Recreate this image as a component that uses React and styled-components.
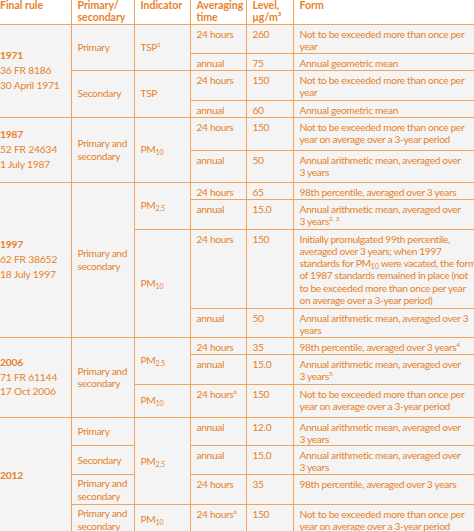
import React from "react";
import styled, { createGlobalStyle } from "styled-components";

const GlobalStyle = createGlobalStyle`
  html, body {
    margin: 0;
    padding: 0;
    background: #ffffff;
    overflow: hidden;
  }
  body {
    font-family: Lato, "Open Sans", sans-serif;
  }
`;

const orange = "#e6822a";
const line = "#f2a35c";

const Table = styled.table`
  width: 474px;
  table-layout: fixed;
  border-collapse: collapse;
  color: ${orange};
  font-size: 10.2px;
  letter-spacing: -0.35px;
  line-height: 12.3px;
  margin-left: -1px;
`;

const HeadRow = styled.tr`
  height: 24px;
  background: #ffffff;
`;

const Th = styled.th`
  text-align: left;
  vertical-align: top;
  font-weight: 700;
  font-size: 10.5px;
  letter-spacing: 0;
  padding: 0 0 0 ${(p) => (p.$first ? 1 : 6)}px;
  line-height: 11.5px;
  border: 1px solid ${line};
  border-top: none;
  border-bottom-width: 1.5px;
  &:first-child {
    border-left: none;
  }
  &:last-child {
    border-right: none;
  }
`;

const Row = styled.tr`
  height: ${(p) => p.$h}px;
  background: #f4f4f4;
`;

const Td = styled.td`
  vertical-align: ${(p) => (p.$mid ? "middle" : "top")};
  padding: ${(p) => (p.$mid ? "0 0 0 6px" : "3px 0 0 6px")};
  border: 1px solid ${line};
  white-space: nowrap;
  overflow: visible;
  &:last-child {
    border-right: none;
  }
`;

const RuleCell = styled.td`
  vertical-align: middle;
  padding: 0 0 0 1px;
  border: 1px solid ${line};
  border-left: none;
  line-height: 14.8px;
  font-size: 10.3px;
  letter-spacing: -0.2px;
  white-space: nowrap;
`;

const Year = styled.div`
  font-weight: 700;
`;

const Sub = styled.sub`
  font-size: 7px;
  line-height: 0;
  vertical-align: -2px;
  letter-spacing: 0;
`;

const Sup = styled.sup`
  font-size: 6.5px;
  line-height: 0;
  vertical-align: 4px;
  letter-spacing: 0;
`;

const PM = ({ n }) => (
  <>
    PM<Sub>{n}</Sub>
  </>
);

const Rule = ({ span, year, fr, date }) => (
  <RuleCell rowSpan={span}>
    <Year>{year}</Year>
    {fr && <div>{fr}</div>}
    {date && <div>{date}</div>}
  </RuleCell>
);

const notExceeded3 = (
  <>
    Not to be exceeded more than once per
    <br />
    year on average over a 3-year period
  </>
);

export default function App() {
  return (
    <>
      <GlobalStyle />
      <Table>
        <colgroup>
          <col style={{ width: 72 }} />
          <col style={{ width: 63 }} />
          <col style={{ width: 56 }} />
          <col style={{ width: 56 }} />
          <col style={{ width: 47 }} />
          <col style={{ width: 181 }} />
        </colgroup>
        <thead>
          <HeadRow>
            <Th $first>Final rule</Th>
            <Th>
              Primary/
              <br />
              secondary
            </Th>
            <Th>Indicator</Th>
            <Th>
              Averaging
              <br />
              time
            </Th>
            <Th>
              Level,
              <br />
              μg/m³
            </Th>
            <Th>Form</Th>
          </HeadRow>
        </thead>
        <tbody>
          <Row $h={29}>
            <Rule span={4} year="1971" fr="36 FR 8186" date="30 April 1971" />
            <Td $mid rowSpan={2}>Primary</Td>
            <Td $mid rowSpan={2}>
              TSP<Sup>1</Sup>
            </Td>
            <Td>24 hours</Td>
            <Td>260</Td>
            <Td>
              Not to be exceeded more than once per
              <br />
              year
            </Td>
          </Row>
          <Row $h={17}>
            <Td>annual</Td>
            <Td>75</Td>
            <Td>Annual geometric mean</Td>
          </Row>
          <Row $h={30}>
            <Td $mid rowSpan={2}>Secondary</Td>
            <Td $mid rowSpan={2}>TSP</Td>
            <Td>24 hours</Td>
            <Td>150</Td>
            <Td>
              Not to be exceeded more than once per
              <br />
              year
            </Td>
          </Row>
          <Row $h={17}>
            <Td>annual</Td>
            <Td>60</Td>
            <Td>Annual geometric mean</Td>
          </Row>

          <Row $h={33}>
            <Rule span={2} year="1987" fr="52 FR 24634" date="1 July 1987" />
            <Td $mid rowSpan={2}>
              Primary and
              <br />
              secondary
            </Td>
            <Td $mid rowSpan={2}>
              <PM n="10" />
            </Td>
            <Td>24 hours</Td>
            <Td>150</Td>
            <Td>{notExceeded3}</Td>
          </Row>
          <Row $h={32}>
            <Td>annual</Td>
            <Td>50</Td>
            <Td>
              Annual arithmetic mean, averaged over
              <br />3 years
            </Td>
          </Row>

          <Row $h={17}>
            <Rule span={4} year="1997" fr="62 FR 38652" date="18 July 1997" />
            <Td $mid rowSpan={4}>
              Primary and
              <br />
              secondary
            </Td>
            <Td $mid rowSpan={2}>
              <PM n="2.5" />
            </Td>
            <Td>24 hours</Td>
            <Td>65</Td>
            <Td>98th percentile, averaged over 3 years</Td>
          </Row>
          <Row $h={30}>
            <Td>annual</Td>
            <Td>15.0</Td>
            <Td>
              Annual arithmetic mean, averaged over
              <br />3 years<Sup>2, 3</Sup>
            </Td>
          </Row>
          <Row $h={79}>
            <Td $mid rowSpan={2}>
              <PM n="10" />
            </Td>
            <Td>24 hours</Td>
            <Td>150</Td>
            <Td>
              Initially promulgated 99th percentile,
              <br />
              averaged over 3 years; when 1997
              <br />
              standards for <PM n="10" /> were vacated, the form
              <br />
              of 1987 standards remained in place (not
              <br />
              to be exceeded more than once per year
              <br />
              on average over a 3-year period)
            </Td>
          </Row>
          <Row $h={29}>
            <Td>annual</Td>
            <Td>50</Td>
            <Td>
              Annual arithmetic mean, averaged over 3
              <br />
              years
            </Td>
          </Row>

          <Row $h={17}>
            <Rule span={3} year="2006" fr="71 FR 61144" date="17 Oct 2006" />
            <Td $mid rowSpan={3}>
              Primary and
              <br />
              secondary
            </Td>
            <Td $mid rowSpan={2}>
              <PM n="2.5" />
            </Td>
            <Td>24 hours</Td>
            <Td>35</Td>
            <Td>
              98th percentile, averaged over 3 years<Sup>4</Sup>
            </Td>
          </Row>
          <Row $h={30}>
            <Td>annual</Td>
            <Td>15.0</Td>
            <Td>
              Annual arithmetic mean, averaged over
              <br />3 years<Sup>5</Sup>
            </Td>
          </Row>
          <Row $h={33}>
            <Td $mid>
              <PM n="10" />
            </Td>
            <Td>
              24 hours<Sup>6</Sup>
            </Td>
            <Td>150</Td>
            <Td>{notExceeded3}</Td>
          </Row>

          <Row $h={27}>
            <Rule span={4} year="2012" />
            <Td $mid>Primary</Td>
            <Td $mid rowSpan={3}>
              <PM n="2.5" />
            </Td>
            <Td>annual</Td>
            <Td>12.0</Td>
            <Td>
              Annual arithmetic mean, averaged over
              <br />3 years
            </Td>
          </Row>
          <Row $h={29}>
            <Td $mid>Secondary</Td>
            <Td>annual</Td>
            <Td>15.0</Td>
            <Td>
              Annual arithmetic mean, averaged over
              <br />3 years
            </Td>
          </Row>
          <Row $h={30}>
            <Td $mid>
              Primary and
              <br />
              secondary
            </Td>
            <Td>24 hours</Td>
            <Td>35</Td>
            <Td>98th percentile, averaged over 3 years</Td>
          </Row>
          <Row $h={30}>
            <Td $mid>
              Primary and
              <br />
              secondary
            </Td>
            <Td $mid>
              <PM n="10" />
            </Td>
            <Td>
              24 hours<Sup>6</Sup>
            </Td>
            <Td>150</Td>
            <Td>{notExceeded3}</Td>
          </Row>
        </tbody>
      </Table>
    </>
  );
}
